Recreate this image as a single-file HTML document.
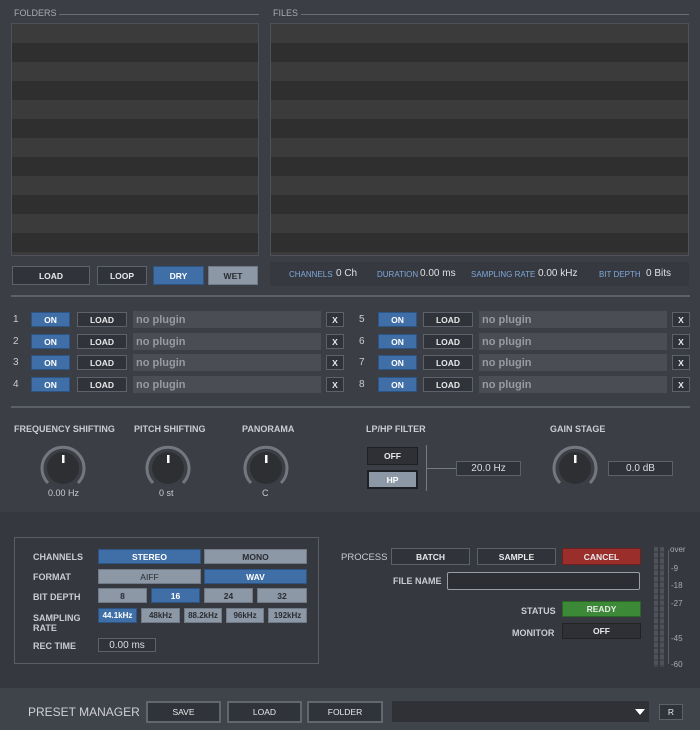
<!DOCTYPE html>
<html><head><style>
*{margin:0;padding:0;box-sizing:border-box}
body{width:700px;height:730px;background:#3b3e45;font-family:"Liberation Sans",Arial,sans-serif;position:relative;overflow:hidden;color:#d6d8dc}
.a{position:absolute}
.t{position:absolute;font-size:9px;color:#c9ccd1;white-space:nowrap}
.b{position:absolute;font-size:8.5px;font-weight:bold;display:flex;align-items:center;justify-content:center;color:#e8e9eb;border:1px solid #5d6169;background:#30333a}
.blue{background:#3f6fa6;border-color:#2d5584;color:#fff}
.grey{background:#8c98a6;border-color:#6f7a86;color:#2a2d33}
.list{position:absolute;border:1px solid #4e5158;background:repeating-linear-gradient(#3b3b3b 0 19px,#2f2f2f 19px 38px)}
.name{position:absolute;background:#4a4d54;font-size:11px;font-weight:bold;color:#989ba1;padding-left:3px;display:flex;align-items:center}
.hr{position:absolute;height:2px;background:#5c6067}
.knob{position:absolute;width:48px;height:48px}
.lbl{position:absolute;font-size:9px;font-weight:bold;color:#c9ccd1;white-space:nowrap}
.box{position:absolute;border:1px solid #5d6169;background:#30333a;font-size:10px;color:#dcdde0;display:flex;align-items:center;justify-content:center}
</style></head><body>
<div class="t" style="left:14px;top:8px;color:#a8abb1">FOLDERS</div>
<div class="a" style="left:59px;top:14px;width:200px;height:1px;background:#6a6e75"></div>
<div class="t" style="left:273px;top:8px;color:#a8abb1">FILES</div>
<div class="a" style="left:301px;top:14px;width:388px;height:1px;background:#6a6e75"></div>
<div class="list" style="left:11px;top:23px;width:248px;height:233px"></div>
<div class="list" style="left:270px;top:23px;width:419px;height:233px"></div>

<div class="b" style="left:12px;top:266px;width:78px;height:19px">LOAD</div>
<div class="b" style="left:97px;top:266px;width:50px;height:19px">LOOP</div>
<div class="b blue" style="left:153px;top:266px;width:51px;height:19px">DRY</div>
<div class="b grey" style="left:208px;top:266px;width:50px;height:19px">WET</div>
<div class="a" style="left:270px;top:262px;width:419px;height:24px;background:#363940"></div>
<div class="t" style="left:289px;top:270px;font-size:8px;color:#7fa8d8">CHANNELS</div>
<div class="t" style="left:336px;top:268px;font-size:10px;color:#e0e1e4">0 Ch</div>
<div class="t" style="left:377px;top:270px;font-size:8px;color:#7fa8d8">DURATION</div>
<div class="t" style="left:420px;top:268px;font-size:10px;color:#e0e1e4">0.00 ms</div>
<div class="t" style="left:471px;top:270px;font-size:8px;color:#7fa8d8">SAMPLING RATE</div>
<div class="t" style="left:538px;top:268px;font-size:10px;color:#e0e1e4">0.00 kHz</div>
<div class="t" style="left:599px;top:270px;font-size:8px;color:#7fa8d8">BIT DEPTH</div>
<div class="t" style="left:646px;top:268px;font-size:10px;color:#e0e1e4">0 Bits</div>
<div class="hr" style="left:11px;top:295px;width:679px"></div>

<div class="t" style="left:13px;top:314px;font-size:10px">1</div>
<div class="b blue" style="left:31px;top:312px;width:39px;height:15px">ON</div>
<div class="b" style="left:77px;top:312px;width:50px;height:15px">LOAD</div>
<div class="name" style="left:133px;top:311px;width:188px;height:17px">no plugin</div>
<div class="b" style="left:326px;top:312px;width:18px;height:15px">X</div>
<div class="t" style="left:13px;top:336px;font-size:10px">2</div>
<div class="b blue" style="left:31px;top:334px;width:39px;height:15px">ON</div>
<div class="b" style="left:77px;top:334px;width:50px;height:15px">LOAD</div>
<div class="name" style="left:133px;top:333px;width:188px;height:17px">no plugin</div>
<div class="b" style="left:326px;top:334px;width:18px;height:15px">X</div>
<div class="t" style="left:13px;top:357px;font-size:10px">3</div>
<div class="b blue" style="left:31px;top:355px;width:39px;height:15px">ON</div>
<div class="b" style="left:77px;top:355px;width:50px;height:15px">LOAD</div>
<div class="name" style="left:133px;top:354px;width:188px;height:17px">no plugin</div>
<div class="b" style="left:326px;top:355px;width:18px;height:15px">X</div>
<div class="t" style="left:13px;top:379px;font-size:10px">4</div>
<div class="b blue" style="left:31px;top:377px;width:39px;height:15px">ON</div>
<div class="b" style="left:77px;top:377px;width:50px;height:15px">LOAD</div>
<div class="name" style="left:133px;top:376px;width:188px;height:17px">no plugin</div>
<div class="b" style="left:326px;top:377px;width:18px;height:15px">X</div>

<div class="t" style="left:359px;top:314px;font-size:10px">5</div>
<div class="b blue" style="left:378px;top:312px;width:39px;height:15px">ON</div>
<div class="b" style="left:423px;top:312px;width:50px;height:15px">LOAD</div>
<div class="name" style="left:479px;top:311px;width:188px;height:17px">no plugin</div>
<div class="b" style="left:672px;top:312px;width:18px;height:15px">X</div>
<div class="t" style="left:359px;top:336px;font-size:10px">6</div>
<div class="b blue" style="left:378px;top:334px;width:39px;height:15px">ON</div>
<div class="b" style="left:423px;top:334px;width:50px;height:15px">LOAD</div>
<div class="name" style="left:479px;top:333px;width:188px;height:17px">no plugin</div>
<div class="b" style="left:672px;top:334px;width:18px;height:15px">X</div>
<div class="t" style="left:359px;top:357px;font-size:10px">7</div>
<div class="b blue" style="left:378px;top:355px;width:39px;height:15px">ON</div>
<div class="b" style="left:423px;top:355px;width:50px;height:15px">LOAD</div>
<div class="name" style="left:479px;top:354px;width:188px;height:17px">no plugin</div>
<div class="b" style="left:672px;top:355px;width:18px;height:15px">X</div>
<div class="t" style="left:359px;top:379px;font-size:10px">8</div>
<div class="b blue" style="left:378px;top:377px;width:39px;height:15px">ON</div>
<div class="b" style="left:423px;top:377px;width:50px;height:15px">LOAD</div>
<div class="name" style="left:479px;top:376px;width:188px;height:17px">no plugin</div>
<div class="b" style="left:672px;top:377px;width:18px;height:15px">X</div>

<div class="hr" style="left:11px;top:406px;width:679px"></div>

<div class="lbl" style="left:14px;top:424px">FREQUENCY SHIFTING</div>
<div class="lbl" style="left:134px;top:424px">PITCH SHIFTING</div>
<div class="lbl" style="left:242px;top:424px">PANORAMA</div>
<div class="lbl" style="left:366px;top:424px">LP/HP FILTER</div>
<div class="lbl" style="left:550px;top:424px">GAIN STAGE</div>

<svg class="knob" style="left:39px;top:442px" viewBox="0 0 48 48"><path d="M9 41 A21 21 0 1 1 39 41" fill="none" stroke="#74777e" stroke-width="3"/><circle cx="24" cy="26" r="16" fill="#2e2f32"/><rect x="23" y="13" width="2.5" height="8" fill="#fff"/></svg>
<svg class="knob" style="left:144px;top:442px" viewBox="0 0 48 48"><path d="M9 41 A21 21 0 1 1 39 41" fill="none" stroke="#74777e" stroke-width="3"/><circle cx="24" cy="26" r="16" fill="#2e2f32"/><rect x="23" y="13" width="2.5" height="8" fill="#fff"/></svg>
<svg class="knob" style="left:242px;top:442px" viewBox="0 0 48 48"><path d="M9 41 A21 21 0 1 1 39 41" fill="none" stroke="#74777e" stroke-width="3"/><circle cx="24" cy="26" r="16" fill="#2e2f32"/><rect x="23" y="13" width="2.5" height="8" fill="#fff"/></svg>
<svg class="knob" style="left:551px;top:442px" viewBox="0 0 48 48"><path d="M9 41 A21 21 0 1 1 39 41" fill="none" stroke="#74777e" stroke-width="3"/><circle cx="24" cy="26" r="16" fill="#2e2f32"/><rect x="23" y="13" width="2.5" height="8" fill="#fff"/></svg>
<div class="t" style="left:48px;top:488px">0.00 Hz</div>
<div class="t" style="left:159px;top:488px">0 st</div>
<div class="t" style="left:262px;top:488px">C</div>

<div class="b" style="left:367px;top:447px;width:51px;height:18px;border-color:#1f2024;background:#2e3036">OFF</div>
<div class="b grey" style="left:367px;top:470px;width:51px;height:19px;border:2px solid #1f2024;color:#fff">HP</div>
<div class="a" style="left:426px;top:445px;width:1px;height:46px;background:#777b82"></div>
<div class="a" style="left:427px;top:468px;width:29px;height:1px;background:#777b82"></div>
<div class="box" style="left:456px;top:461px;width:65px;height:15px">20.0 Hz</div>
<div class="box" style="left:608px;top:461px;width:65px;height:15px">0.0 dB</div>

<div class="a" style="left:0;top:512px;width:700px;height:176px;background:#35383e"></div>
<div class="a" style="left:14px;top:537px;width:305px;height:127px;border:1px solid #5a5e65"></div>
<div class="lbl" style="left:33px;top:552px">CHANNELS</div>
<div class="lbl" style="left:33px;top:572px">FORMAT</div>
<div class="lbl" style="left:33px;top:592px">BIT DEPTH</div>
<div class="lbl" style="left:33px;top:613px;line-height:10px">SAMPLING<br>RATE</div>
<div class="lbl" style="left:33px;top:641px">REC TIME</div>
<div class="b blue" style="left:98px;top:549px;width:103px;height:15px">STEREO</div>
<div class="b grey" style="left:204px;top:549px;width:103px;height:15px">MONO</div>
<div class="b grey" style="left:98px;top:569px;width:103px;height:15px;font-weight:normal">AIFF</div>
<div class="b blue" style="left:204px;top:569px;width:103px;height:15px">WAV</div>
<div class="b grey" style="left:98px;top:588px;width:49px;height:15px">8</div>
<div class="b blue" style="left:151px;top:588px;width:49px;height:15px">16</div>
<div class="b grey" style="left:204px;top:588px;width:49px;height:15px">24</div>
<div class="b grey" style="left:257px;top:588px;width:50px;height:15px">32</div>
<div class="b blue" style="left:98px;top:608px;width:39px;height:15px;font-size:8px">44.1kHz</div>
<div class="b grey" style="left:141px;top:608px;width:39px;height:15px;font-size:8px">48kHz</div>
<div class="b grey" style="left:184px;top:608px;width:38px;height:15px;font-size:8px">88.2kHz</div>
<div class="b grey" style="left:226px;top:608px;width:38px;height:15px;font-size:8px">96kHz</div>
<div class="b grey" style="left:268px;top:608px;width:39px;height:15px;font-size:8px">192kHz</div>
<div class="box" style="left:98px;top:638px;width:58px;height:14px">0.00 ms</div>

<div class="t" style="left:341px;top:552px;font-size:9.5px">PROCESS</div>
<div class="b" style="left:391px;top:548px;width:79px;height:17px">BATCH</div>
<div class="b" style="left:477px;top:548px;width:79px;height:17px">SAMPLE</div>
<div class="b" style="left:562px;top:548px;width:79px;height:17px;background:#9a2e2a;border-color:#6d201d">CANCEL</div>
<div class="lbl" style="left:393px;top:576px">FILE NAME</div>
<div class="a" style="left:447px;top:572px;width:193px;height:18px;border:1px solid #9a9da3;border-radius:2px;background:#2c2e33"></div>
<div class="lbl" style="left:521px;top:606px">STATUS</div>
<div class="b" style="left:562px;top:601px;width:79px;height:16px;background:#3c8a37;border-color:#2a6626">READY</div>
<div class="lbl" style="left:512px;top:628px">MONITOR</div>
<div class="b" style="left:562px;top:623px;width:79px;height:16px;background:#2e3036;border-color:#222">OFF</div>
<div class="a" style="left:654px;top:547px;width:4px;height:120px;background:repeating-linear-gradient(#4f5359 0 4px,#42464c 4px 6px)"></div>
<div class="a" style="left:660px;top:547px;width:4px;height:120px;background:repeating-linear-gradient(#4f5359 0 4px,#42464c 4px 6px)"></div>
<div class="a" style="left:668px;top:550px;width:1px;height:114px;background:#5c6067"></div>
<div class="t" style="left:670px;top:545px;font-size:8px;color:#a8abb1">over</div>
<div class="t" style="left:671px;top:564px;font-size:8px;color:#a8abb1">-9</div>
<div class="t" style="left:671px;top:581px;font-size:8px;color:#a8abb1">-18</div>
<div class="t" style="left:671px;top:599px;font-size:8px;color:#a8abb1">-27</div>
<div class="t" style="left:671px;top:634px;font-size:8px;color:#a8abb1">-45</div>
<div class="t" style="left:671px;top:660px;font-size:8px;color:#a8abb1">-60</div>

<div class="a" style="left:0;top:688px;width:700px;height:42px;background:#3f434a"></div>
<div class="t" style="left:28px;top:705px;font-size:12px;color:#cfd1d5">PRESET MANAGER</div>
<div class="b" style="left:146px;top:701px;width:75px;height:22px;border:2px solid #62666d;font-weight:normal">SAVE</div>
<div class="b" style="left:227px;top:701px;width:75px;height:22px;border:2px solid #62666d;font-weight:normal">LOAD</div>
<div class="b" style="left:307px;top:701px;width:76px;height:22px;border:2px solid #62666d;font-weight:normal">FOLDER</div>
<div class="a" style="left:392px;top:701px;width:257px;height:21px;background:#2f3136"></div>
<div class="a" style="left:635px;top:709px;width:0;height:0;border-left:5px solid transparent;border-right:5px solid transparent;border-top:6px solid #fff"></div>
<div class="b" style="left:659px;top:704px;width:24px;height:16px;font-weight:normal">R</div>
</body></html>
